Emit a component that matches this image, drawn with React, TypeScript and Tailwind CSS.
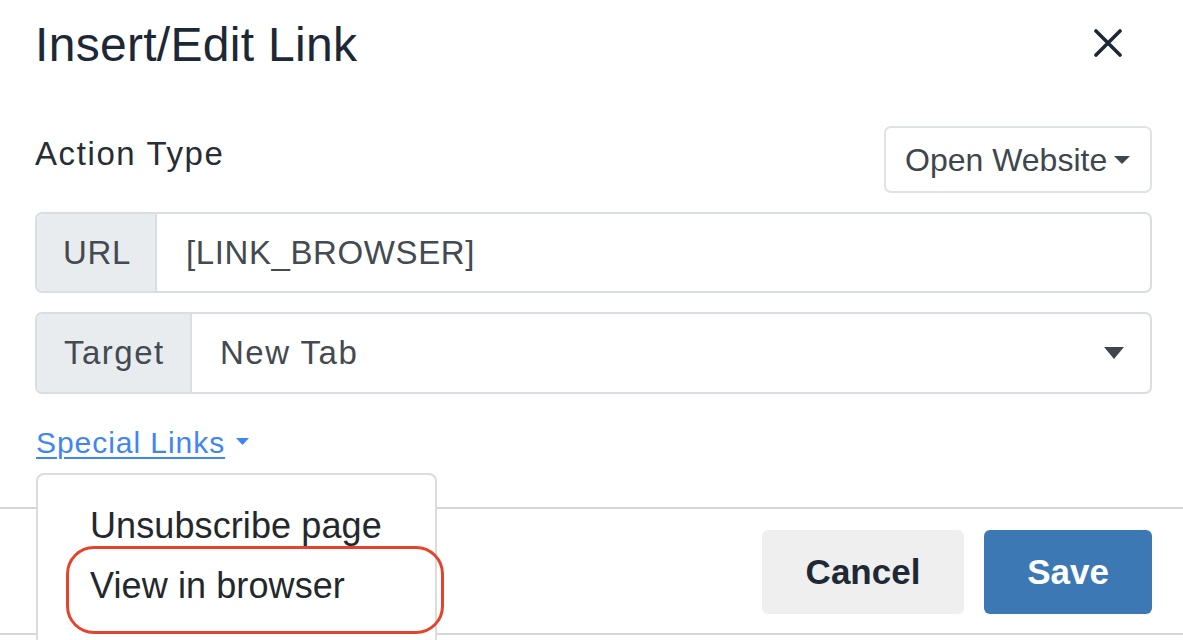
import React from "react";

function Caret({ className }: { className: string }) {
  return (
    <svg className={className} viewBox="0 0 10 6" preserveAspectRatio="none">
      <path d="M0 0 L10 0 L5 6 Z" fill="currentColor" />
    </svg>
  );
}

export default function App() {
  return (
    <div className="relative w-[1183px] h-[640px] overflow-hidden bg-white font-['Liberation_Sans',Arial,sans-serif]">
      {/* Header */}
      <div className="flex h-[126px] items-start justify-between pl-[35px] pr-[60px] pt-[21px]">
        <h1 className="text-[48px] leading-[48px] text-[#1d2836] tracking-[0.3px]">Insert/Edit Link</h1>
        <svg className="mt-[8px] h-[28px] w-[30px] text-[#1d2836]" viewBox="0 0 30 28">
          <path d="M3 2 L27 26 M27 2 L3 26" stroke="currentColor" strokeWidth="3.6" strokeLinecap="round" />
        </svg>
      </div>

      {/* Body */}
      <div className="pl-[35px] pr-[31px]">
        <div className="flex h-[67px] items-start justify-between">
          <span className="mt-[9px] text-[33px] leading-[38px] tracking-[1.6px] text-[#262d35]">Action Type</span>
          <button className="flex h-[67px] w-[268px] items-center rounded-[7px] border-2 border-[#dfe2e6] pl-[19px] text-[32px] text-[#40464d]">
            <span>Open Website</span>
            <Caret className="ml-[7px] h-[8px] w-[16px] text-[#40464d]" />
          </button>
        </div>

        <div className="mt-[19px] flex h-[81px] overflow-hidden rounded-[7px] border-2 border-[#dadde1]">
          <div className="flex w-[120px] items-center border-r-2 border-[#dadde1] bg-[#e9ecef] pl-[26px] text-[33px] text-[#444a51] tracking-[0.7px]">
            URL
          </div>
          <div className="flex flex-1 items-center pl-[29px] text-[33px] text-[#444a51] tracking-[0.6px]">[LINK_BROWSER]</div>
        </div>

        <div className="mt-[19px] flex h-[82px] overflow-hidden rounded-[7px] border-2 border-[#dadde1]">
          <div className="flex w-[155px] items-center border-r-2 border-[#dadde1] bg-[#e9ecef] pl-[27px] text-[33px] text-[#444a51] tracking-[1.5px]">
            Target
          </div>
          <div className="flex flex-1 items-center justify-between pl-[28px] pr-[26px] text-[33px] text-[#444a51]">
            <span className="tracking-[1.5px]">New Tab</span>
            <Caret className="h-[12px] w-[20px] text-[#40464d]" />
          </div>
        </div>

        <div className="mt-[32px] flex h-[34px] items-center">
          <span className="ml-[1px] text-[30px] leading-[34px] tracking-[0.95px] text-[#3f86f4] underline decoration-[1.5px] underline-offset-[4px]">
            Special Links
          </span>
          <Caret className="ml-[11px] mt-[-4px] h-[7px] w-[13px] text-[#3f86f4]" />
        </div>
      </div>

      {/* Footer */}
      <div className="mt-[47px] flex justify-end gap-[20px] border-y-2 border-[#d6d6d6] pb-[19px] pr-[31px] pt-[21px]">
        <button className="h-[84px] w-[202px] rounded-[6px] bg-[#efefef] text-[35px] font-bold text-[#1e2935]">Cancel</button>
        <button className="h-[84px] w-[168px] rounded-[6px] bg-[#3c78b3] text-[35px] font-bold text-white">Save</button>
      </div>

      {/* Dropdown menu */}
      <div className="absolute left-[36px] top-[473px] h-[200px] w-[401px] rounded-[8px] border-2 border-[#dcdcdc] bg-white pt-[21px] text-[36px] text-[#24282d]">
        <div className="h-[60px] pl-[52px] leading-[60px] tracking-[0.1px]">Unsubscribe page</div>
        <div className="h-[60px] pl-[52px] leading-[60px] tracking-[0.1px]">View in browser</div>
      </div>

      {/* Red highlight annotation */}
      <div className="absolute left-[66px] top-[546px] h-[88px] w-[378px] rounded-[28px] border-[3.5px] border-[#e5432c]" />
    </div>
  );
}
